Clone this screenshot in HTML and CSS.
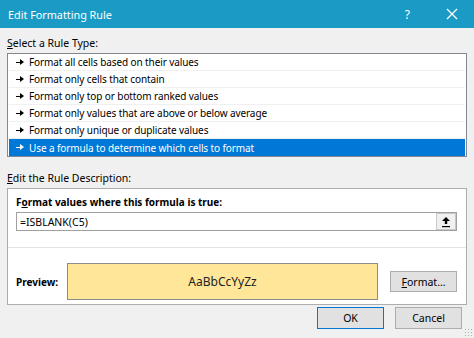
FILE: index.html
```html
<html>
    <head>
        <title>Edit Formatting Rule</title>
        <link rel="stylesheet" href="styles.css">
    </head>
    <body>
        <div class="dialog">
            <div class="titlebar">
                <span class="title">Edit Formatting Rule</span>
                <span class="help">?</span>
                <svg class="close" width="12" height="12" viewBox="0 0 12 12">
                    <path d="M1 1 L11 11 M11 1 L1 11" stroke="#fff" stroke-width="1.3" fill="none" />
                </svg>
            </div>
            <div class="body">
                <div class="label"><u>S</u>elect a Rule Type:</div>
                <div class="listbox">
                    <div class="row"><span class="arrow"></span>Format all cells based on their values</div>
                    <div class="row"><span class="arrow"></span>Format only cells that contain</div>
                    <div class="row"><span class="arrow"></span>Format only top or bottom ranked values</div>
                    <div class="row"><span class="arrow"></span>Format only values that are above or below average</div>
                    <div class="row"><span class="arrow"></span>Format only unique or duplicate values</div>
                    <div class="row selected"><span class="arrow"></span>Use a formula to determine which cells to format</div>
                </div>
                <div class="label desc-label"><u>E</u>dit the Rule Description:</div>
                <div class="panel">
                    <div class="formula">
                        <div class="bold">F<u>o</u>rmat values where this formula is true:</div>
                        <div class="input">
                            <span class="value">=ISBLANK(C5)</span>
                            <span class="picker">
                                <svg width="10" height="12" viewBox="0 0 10 12">
                                    <path d="M5 1 L9 5 L6.2 5 L6.2 8 L3.8 8 L3.8 5 L1 5 Z" fill="#000" />
                                    <rect x="1" y="10" width="8" height="1.2" fill="#000" />
                                </svg>
                            </span>
                        </div>
                    </div>
                    <div class="preview-row">
                        <div class="bold preview-label">Preview:</div>
                        <div class="preview">AaBbCcYyZz</div>
                        <button class="btn format-btn"><u>F</u>ormat...</button>
                    </div>
                </div>
                <div class="actions">
                    <button class="btn ok">OK</button>
                    <button class="btn">Cancel</button>
                </div>
            </div>
            <div class="grip"></div>
        </div>
    </body>
</html>
```

FILE: styles.css
```css
/**/

body {
    margin: 0;
    background: #f0f0f0;
    font-family: "Noto Sans", sans-serif;
    font-size: 10.5px;
    color: #000;
}

.dialog {
    position: relative;
    width: 474px;
    height: 338px;
    overflow: hidden;
}

.titlebar {
    height: 28px;
    background: #1a9bc6;
    color: #fff;
    display: flex;
    align-items: center;
    padding-left: 8px;
}

.title {
    flex: 1;
    font-size: 10.8px;
}

.help {
    font-size: 12px;
    margin-right: 36px;
}

.close {
    margin-right: 16px;
}

.body {
    padding: 6px 7px 0 7px;
}

.label {
    height: 18px;
    line-height: 18px;
}

.listbox {
    margin-top: 1px;
    background: #fff;
    border: 1px solid #828790;
    padding: 0 1px;
}

.row {
    height: 16px;
    line-height: 16px;
    border-bottom: 1px solid #f0f0f0;
    padding-left: 7px;
    display: flex;
    align-items: center;
    font-size: 10px;
    letter-spacing: -0.1px;
}

.row.selected {
    background: #0078d7;
    color: #fff;
    border-bottom: none;
    height: 17px;
}

.arrow {
    display: inline-block;
    width: 5px;
    height: 1px;
    background: currentColor;
    position: relative;
    margin-right: 8px;
}

.arrow:after {
    content: "";
    position: absolute;
    left: 4px;
    top: -3px;
    border-left: 4px solid currentColor;
    border-top: 3.5px solid transparent;
    border-bottom: 3.5px solid transparent;
}

.desc-label {
    margin-top: 12px;
}

.panel {
    margin-top: 1px;
    background: #fff;
    border: 1px solid #adadad;
    height: 115px;
}

.formula {
    padding: 6px 9px 0 8px;
    height: 52px;
    border-bottom: 1px solid #e3e3e3;
}

.bold {
    font-weight: bold;
    font-size: 10px;
}

.input {
    margin-top: 3px;
    height: 17px;
    border: 1px solid #a0a0a0;
    display: flex;
    align-items: center;
    justify-content: space-between;
    padding-left: 3px;
}

.picker {
    width: 18px;
    height: 15px;
    background: #f0f0f0;
    border: 1px solid #c8c8c8;
    display: flex;
    align-items: center;
    justify-content: center;
    margin-right: 0;
}

.preview-row {
    display: flex;
    align-items: center;
    padding: 15px 9px 0 8px;
}

.preview-label {
    width: 51px;
}

.preview {
    width: 310px;
    height: 35px;
    line-height: 35px;
    background: #ffe699;
    border: 1px solid #8c8c8c;
    text-align: center;
    font-size: 12px;
    color: #222;
}

.btn {
    font-family: inherit;
    font-size: 10.5px;
    background: #e1e1e1;
    border: 1px solid #adadad;
    padding: 0;
    color: #000;
}

.format-btn {
    margin-left: 12px;
    width: 67px;
    height: 21px;
}

.actions {
    display: flex;
    justify-content: flex-end;
    gap: 11px;
    padding-top: 2px;
    padding-right: 5px;
}

.actions .btn {
    width: 67px;
    height: 22px;
}

.ok {
    border: 1px solid #0078d7;
}

.grip {
    position: absolute;
    right: 2px;
    bottom: 2px;
    width: 8px;
    height: 8px;
    background: radial-gradient(circle, #b0b0b0 0.8px, transparent 1px) 0 0 / 3px 3px;
}
/**/
```
